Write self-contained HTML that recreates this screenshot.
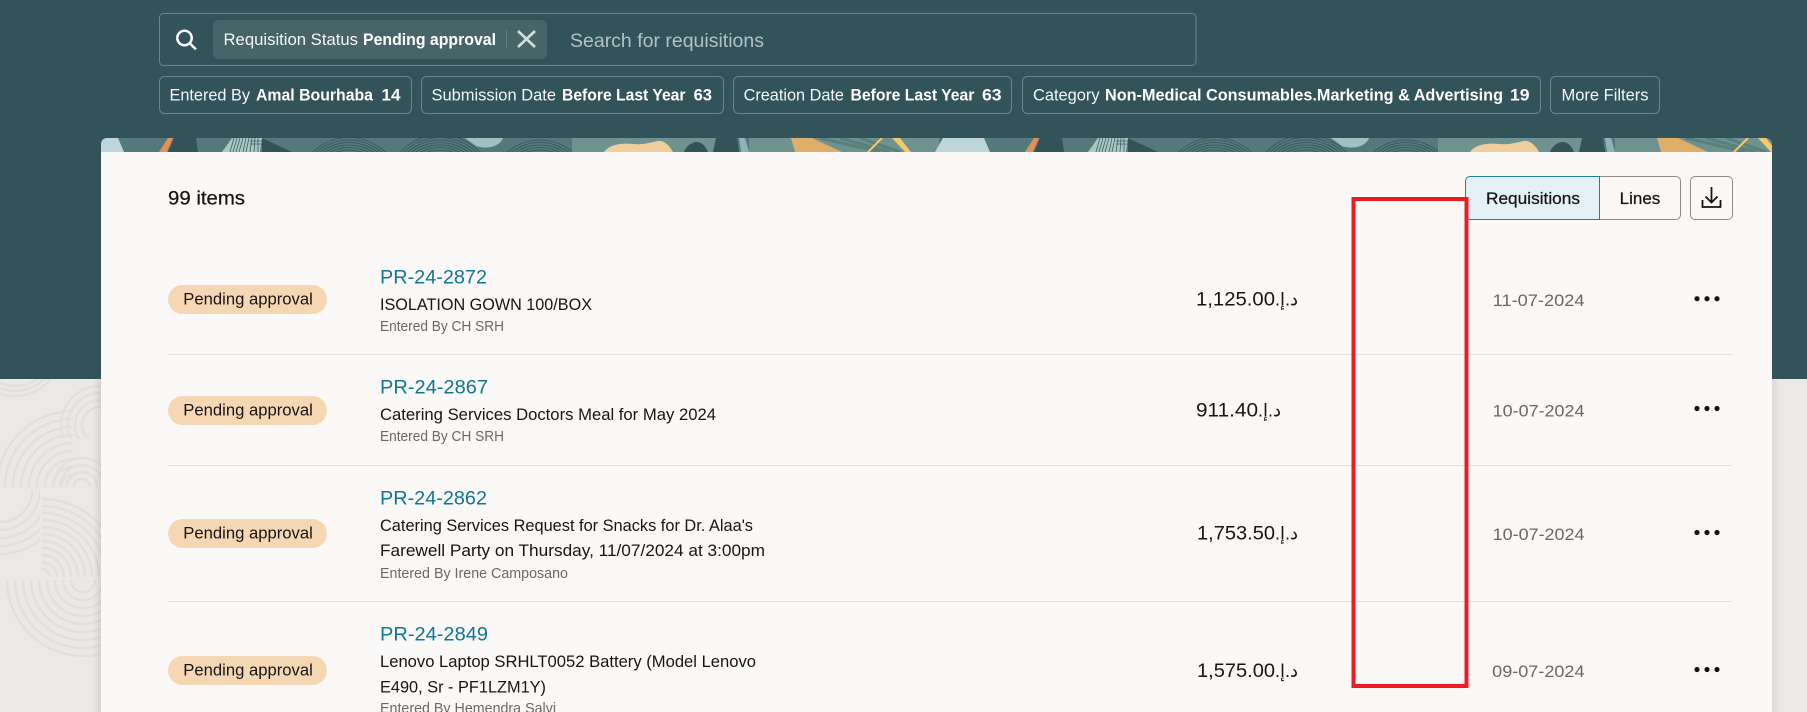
<!DOCTYPE html>
<html lang="en"><head><meta charset="utf-8"><title>Requisitions</title>
<style>
html,body{margin:0;padding:0;width:1807px;height:712px;overflow:hidden;background:#ebe9e7}
svg{display:block}
text{font-family:"Liberation Sans","DejaVu Sans",sans-serif;white-space:pre}
.f{font-size:16.8px;fill:#f4f6f6}
.b{font-weight:700;fill:#fff}
.ph{font-size:19.5px;fill:#b3c1c3}
.pr{font-size:19.5px;fill:#0f7696}
.d{font-size:16.8px;fill:#161513}
.e{font-size:14.4px;fill:#6b6864}
.a{font-size:19.5px;fill:#161513}
.dt{font-size:16.8px;fill:#6b6864}
.bd{font-size:16.8px;fill:#161513}
.ar{font-size:18px;fill:#161513;direction:ltr;unicode-bidi:bidi-override}
.m{stroke:#161513;stroke-width:.25px}
.pill{fill:none;stroke:#6c8388;stroke-width:1}
.bg-arc circle{fill:none;stroke:#e2e0de;stroke-width:2.4}
.fp circle{fill:none;stroke:#345557;stroke-width:.8}
</style></head><body>
<svg width="1807" height="712" viewBox="0 0 1807 712" xmlns="http://www.w3.org/2000/svg">
<defs>
<clipPath id="cardTop"><path d="M101 152V144a6 6 0 0 1 6-6H1766a6 6 0 0 1 6 6V152Z"/></clipPath>
<clipPath id="t1"><rect x="0" y="400" width="73" height="87"/></clipPath>
<clipPath id="t1b"><rect x="55" y="440" width="46" height="47"/></clipPath>
<clipPath id="t2"><rect x="42" y="490" width="60" height="87"/></clipPath>
<clipPath id="t3"><rect x="0" y="490" width="40" height="87"/></clipPath>
<clipPath id="t4"><rect x="0" y="580" width="101" height="80"/></clipPath>
<clipPath id="t5"><rect x="0" y="379" width="60" height="30"/></clipPath>
<clipPath id="t6"><rect x="60" y="379" width="41" height="60"/></clipPath>
<linearGradient id="sh" x1="0" x2="1"><stop offset="0" stop-color="#000" stop-opacity="0"/><stop offset="1" stop-color="#000" stop-opacity=".09"/></linearGradient>
<linearGradient id="sh2" x1="0" x2="1"><stop offset="0" stop-color="#000" stop-opacity=".07"/><stop offset="1" stop-color="#000" stop-opacity="0"/></linearGradient>
<g id="bn">
<rect x="101" y="138" width="866" height="14" fill="#54797a"/>
<path d="M96 138H118L124 152H96Z" fill="#bdd6d9"/>
<path d="M168 138H173L167 152H159Z" fill="#e58f55"/>
<path d="M174 138H196L198 152H168Z" fill="#33525a"/>
<path d="M232 138H262L260 152H222Z" fill="#a8c7c5"/>
<g fill="none" stroke="#3d5e60" stroke-width=".8"><path d="M234 138l-4 14M237 138l-4 14M240 138l-4 14M243 138l-4 14M246 138l-3 14M249 138l-3 14M252 138l-2 14M255 138l-1 14M258 138v14"/><path d="M250 141H262M250 144H262"/></g>
<path d="M262 138L292 152H262Z" fill="#33525a"/>
<g class="fp">
<circle cx="349" cy="190" r="40"/><circle cx="349" cy="190" r="42.500"/><circle cx="349" cy="190" r="45"/><circle cx="349" cy="190" r="47.500"/><circle cx="349" cy="190" r="50"/><circle cx="349" cy="190" r="52.500"/>
<circle cx="440" cy="190" r="40"/><circle cx="440" cy="190" r="42.500"/><circle cx="440" cy="190" r="45"/><circle cx="440" cy="190" r="47.500"/><circle cx="440" cy="190" r="50"/><circle cx="440" cy="190" r="52.500"/><circle cx="440" cy="190" r="55"/>
<circle cx="540" cy="190" r="40"/><circle cx="540" cy="190" r="42.500"/><circle cx="540" cy="190" r="45"/><circle cx="540" cy="190" r="47.500"/><circle cx="540" cy="190" r="50"/>
</g>
<path d="M465 138H503C500 146 488 150 476 146Z" fill="#9cc2c1"/>
<rect x="572" y="138" width="150" height="14" fill="#6d928f"/>
<path d="M604 152C610 144 622 143 634 144C644 145 652 142 658 141C664 140 670 146 673 152Z" fill="#efcf9d"/>
<path d="M684 152C686 146 692 142 697 142C702 142 706 147 708 152Z" fill="#33525a"/>
<path d="M716 138H737L739 152H713Z" fill="#33525a"/>
<path d="M739 138H745L749 152H741Z" fill="#8db5b5"/>
<rect x="749" y="138" width="190" height="14" fill="#6d928f"/>
<path d="M791 138H812L842 152H795Z" fill="#e0ae68"/>
<path d="M820 138L880 152M840 138L890 152M860 138L900 152" stroke="#58807d" stroke-width="3" fill="none"/>
<path d="M882 138L868 152" stroke="#f3ca6b" stroke-width="2" fill="none"/>
<path d="M892 138H900L911 152H905Z" fill="#f3ca6b"/>
<path d="M943 138H977L987 152H935Z" fill="#bdd6d9"/>
</g>
</defs>

<!-- page backgrounds -->
<rect width="1807" height="712" fill="#ebe9e7"/>
<rect width="1807" height="379" fill="#33535a"/>

<!-- background arcs -->
<g class="bg-arc">
<g clip-path="url(#t5)"><circle cx="15" cy="350" r="36"/><circle cx="15" cy="350" r="41"/><circle cx="15" cy="350" r="46"/></g>
<g clip-path="url(#t6)"><circle cx="100" cy="425" r="18"/><circle cx="100" cy="425" r="25"/><circle cx="100" cy="425" r="32"/><circle cx="100" cy="425" r="39"/></g>
<g clip-path="url(#t1)"><circle cx="73" cy="487" r="12"/><circle cx="73" cy="487" r="20"/><circle cx="73" cy="487" r="28"/><circle cx="73" cy="487" r="36"/><circle cx="73" cy="487" r="44"/><circle cx="73" cy="487" r="52"/><circle cx="73" cy="487" r="60"/><circle cx="73" cy="487" r="68"/><circle cx="73" cy="487" r="76"/></g>
<g clip-path="url(#t1b)"><circle cx="82" cy="487" r="8"/><circle cx="82" cy="487" r="15"/><circle cx="82" cy="487" r="22"/><circle cx="82" cy="487" r="29"/></g>
<g clip-path="url(#t2)"><circle cx="42" cy="577" r="8"/><circle cx="42" cy="577" r="15"/><circle cx="42" cy="577" r="22"/><circle cx="42" cy="577" r="29"/><circle cx="42" cy="577" r="36"/><circle cx="42" cy="577" r="43"/><circle cx="42" cy="577" r="50"/><circle cx="42" cy="577" r="57"/><circle cx="42" cy="577" r="64"/><circle cx="42" cy="577" r="71"/><circle cx="42" cy="577" r="78"/></g>
<g clip-path="url(#t3)"><circle cx="0" cy="490" r="32"/><circle cx="0" cy="490" r="40"/><circle cx="0" cy="490" r="48"/><circle cx="0" cy="490" r="56"/><circle cx="0" cy="490" r="64"/></g>
<g clip-path="url(#t4)"><circle cx="83" cy="580" r="12"/><circle cx="83" cy="580" r="20"/><circle cx="83" cy="580" r="28"/><circle cx="83" cy="580" r="36"/><circle cx="83" cy="580" r="44"/><circle cx="83" cy="580" r="52"/><circle cx="83" cy="580" r="60"/><circle cx="83" cy="580" r="68"/><circle cx="83" cy="580" r="76"/></g>
</g>
<rect x="93" y="379" width="8" height="333" fill="url(#sh)"/>
<rect x="1772" y="379" width="8" height="333" fill="url(#sh2)"/>

<!-- search -->
<rect x="159.500" y="13.500" width="1036.500" height="52" rx="4" fill="none" stroke="#6c8388"/>
<circle cx="184.500" cy="38" r="7.200" fill="none" stroke="#fff" stroke-width="2.500"/>
<path d="M189.700 43.300L196 49.400" stroke="#fff" stroke-width="2.500" fill="none"/>
<rect x="213" y="20" width="334" height="39" rx="6" fill="#476469"/>
<text class="f" x="223.500" y="45" textLength="134.500" lengthAdjust="spacingAndGlyphs">Requisition Status</text>
<text class="f b" x="363" y="45" textLength="133" lengthAdjust="spacingAndGlyphs">Pending approval</text>
<path d="M506.500 30V49" stroke="#658085"/>
<path d="M518 31L535 47M535 31L518 47" stroke="#d5dddd" stroke-width="2.600" fill="none"/>
<text class="ph" x="570" y="47" textLength="194" lengthAdjust="spacingAndGlyphs">Search for requisitions</text>

<!-- filter pills -->
<rect class="pill" x="159.500" y="76.500" width="252" height="37" rx="5"/>
<text class="f" x="169.500" y="100.500" textLength="80.500" lengthAdjust="spacingAndGlyphs">Entered By</text>
<text class="f b" x="256" y="100.500" textLength="117" lengthAdjust="spacingAndGlyphs">Amal Bourhaba</text>
<text class="f b" x="381.500" y="100.500" textLength="19" lengthAdjust="spacingAndGlyphs">14</text>

<rect class="pill" x="421.500" y="76.500" width="302" height="37" rx="5"/>
<text class="f" x="431.500" y="100.500" textLength="124.500" lengthAdjust="spacingAndGlyphs">Submission Date</text>
<text class="f b" x="562" y="100.500" textLength="123.500" lengthAdjust="spacingAndGlyphs">Before Last Year</text>
<text class="f b" x="693.600" y="100.500" textLength="18.400" lengthAdjust="spacingAndGlyphs">63</text>

<rect class="pill" x="733.500" y="76.500" width="278" height="37" rx="5"/>
<text class="f" x="743.600" y="100.500" textLength="100.400" lengthAdjust="spacingAndGlyphs">Creation Date</text>
<text class="f b" x="850.500" y="100.500" textLength="123.900" lengthAdjust="spacingAndGlyphs">Before Last Year</text>
<text class="f b" x="982" y="100.500" textLength="19.600" lengthAdjust="spacingAndGlyphs">63</text>

<rect class="pill" x="1022.500" y="76.500" width="518" height="37" rx="5"/>
<text class="f" x="1033" y="100.500" textLength="66.600" lengthAdjust="spacingAndGlyphs">Category</text>
<text class="f b" x="1105" y="100.500" textLength="398" lengthAdjust="spacingAndGlyphs">Non-Medical Consumables.Marketing &amp; Advertising</text>
<text class="f b" x="1510" y="100.500" textLength="19.500" lengthAdjust="spacingAndGlyphs">19</text>

<rect class="pill" x="1550.500" y="76.500" width="109" height="37" rx="5"/>
<text class="f" x="1561.500" y="100.500" textLength="87" lengthAdjust="spacingAndGlyphs">More Filters</text>

<!-- card -->
<path d="M101 152H1772V712H101Z" fill="#fbf9f8"/>
<g clip-path="url(#cardTop)">
<use href="#bn"/>
<use href="#bn" x="866"/>
</g>

<text class="a m" x="168" y="204.500" textLength="77" lengthAdjust="spacingAndGlyphs">99 items</text>

<!-- toggle -->
<path d="M1599.500 176.500H1676a4.500 4.500 0 0 1 4.500 4.500V215a4.500 4.500 0 0 1-4.500 4.500H1599.500Z" fill="none" stroke="#8e8c8a"/>
<path d="M1599.500 176.500H1470a4.500 4.500 0 0 0-4.500 4.500V215a4.500 4.500 0 0 0 4.500 4.500H1599.500Z" fill="#e4f1f7" stroke="#227e9e"/>
<text class="d m" x="1486" y="204" textLength="94" lengthAdjust="spacingAndGlyphs">Requisitions</text>
<text class="d m" x="1619.700" y="204" textLength="40.600" lengthAdjust="spacingAndGlyphs">Lines</text>
<rect x="1690.500" y="176.500" width="42" height="43" rx="4.500" fill="none" stroke="#8e8c8a"/>
<path d="M1711.500 187V202M1705.500 196.500L1711.500 202.500L1717.500 196.500M1702.500 200V207H1720.500V200" fill="none" stroke="#161513" stroke-width="1.800"/>

<!-- separators -->
<path d="M168 354.500H1732M168 465.500H1732M168 601.500H1732" stroke="#e2dfdc" stroke-width="1"/>

<!-- badges -->
<rect x="168" y="285" width="159" height="29" rx="14.500" fill="#f6d7b4"/>
<rect x="168" y="396" width="159" height="29" rx="14.500" fill="#f6d7b4"/>
<rect x="168" y="519" width="159" height="29" rx="14.500" fill="#f6d7b4"/>
<rect x="168" y="656" width="159" height="29" rx="14.500" fill="#f6d7b4"/>
<text class="bd" x="183.300" y="304.500" textLength="129.500" lengthAdjust="spacingAndGlyphs">Pending approval</text>
<text class="bd" x="183.300" y="415.500" textLength="129.500" lengthAdjust="spacingAndGlyphs">Pending approval</text>
<text class="bd" x="183.300" y="538.500" textLength="129.500" lengthAdjust="spacingAndGlyphs">Pending approval</text>
<text class="bd" x="183.300" y="675.500" textLength="129.500" lengthAdjust="spacingAndGlyphs">Pending approval</text>

<!-- row 1 -->
<text class="pr" x="380" y="283.500" textLength="107" lengthAdjust="spacingAndGlyphs">PR-24-2872</text>
<text class="d" x="380" y="310" textLength="212" lengthAdjust="spacingAndGlyphs">ISOLATION GOWN 100/BOX</text>
<text class="e" x="380" y="331" textLength="124" lengthAdjust="spacingAndGlyphs">Entered By CH SRH</text>
<!-- row 2 -->
<text class="pr" x="380" y="393.500" textLength="108" lengthAdjust="spacingAndGlyphs">PR-24-2867</text>
<text class="d" x="380" y="420" textLength="336" lengthAdjust="spacingAndGlyphs">Catering Services Doctors Meal for May 2024</text>
<text class="e" x="380" y="441" textLength="124" lengthAdjust="spacingAndGlyphs">Entered By CH SRH</text>
<!-- row 3 -->
<text class="pr" x="380" y="504.500" textLength="107" lengthAdjust="spacingAndGlyphs">PR-24-2862</text>
<text class="d" x="380" y="531" textLength="373" lengthAdjust="spacingAndGlyphs">Catering Services Request for Snacks for Dr. Alaa's</text>
<text class="d" x="380" y="556" textLength="385" lengthAdjust="spacingAndGlyphs">Farewell Party on Thursday, 11/07/2024 at 3:00pm</text>
<text class="e" x="380" y="578" textLength="188" lengthAdjust="spacingAndGlyphs">Entered By Irene Camposano</text>
<!-- row 4 -->
<text class="pr" x="380" y="640.500" textLength="108" lengthAdjust="spacingAndGlyphs">PR-24-2849</text>
<text class="d" x="380" y="667" textLength="376" lengthAdjust="spacingAndGlyphs">Lenovo Laptop SRHLT0052 Battery (Model Lenovo</text>
<text class="d" x="380" y="692.500" textLength="166" lengthAdjust="spacingAndGlyphs">E490, Sr - PF1LZM1Y)</text>
<text class="e" x="380" y="713" textLength="176" lengthAdjust="spacingAndGlyphs">Entered By Hemendra Salvi</text>

<!-- amounts -->
<text class="a" x="1196" y="305.500" textLength="79" lengthAdjust="spacingAndGlyphs">1,125.00</text>
<text class="ar" x="1275" y="305.500">.إ.د</text>
<text class="a" x="1196" y="416.500" textLength="62" lengthAdjust="spacingAndGlyphs">911.40</text>
<text class="ar" x="1258" y="416.500">.إ.د</text>
<text class="a" x="1197" y="539.500" textLength="78" lengthAdjust="spacingAndGlyphs">1,753.50</text>
<text class="ar" x="1275" y="539.500">.إ.د</text>
<text class="a" x="1197" y="677" textLength="78" lengthAdjust="spacingAndGlyphs">1,575.00</text>
<text class="ar" x="1275" y="677">.إ.د</text>

<!-- dates -->
<text class="dt" x="1492.700" y="306" textLength="91.800" lengthAdjust="spacingAndGlyphs">11-07-2024</text>
<text class="dt" x="1492.700" y="416.500" textLength="91.800" lengthAdjust="spacingAndGlyphs">10-07-2024</text>
<text class="dt" x="1492.700" y="540" textLength="91.800" lengthAdjust="spacingAndGlyphs">10-07-2024</text>
<text class="dt" x="1492.200" y="677" textLength="92.300" lengthAdjust="spacingAndGlyphs">09-07-2024</text>

<!-- action dots -->
<g fill="#161513">
<circle cx="1697" cy="298.700" r="2.600"/><circle cx="1707" cy="298.700" r="2.600"/><circle cx="1717" cy="298.700" r="2.600"/>
<circle cx="1697" cy="408.500" r="2.600"/><circle cx="1707" cy="408.500" r="2.600"/><circle cx="1717" cy="408.500" r="2.600"/>
<circle cx="1697" cy="532.500" r="2.600"/><circle cx="1707" cy="532.500" r="2.600"/><circle cx="1717" cy="532.500" r="2.600"/>
<circle cx="1697" cy="669.500" r="2.600"/><circle cx="1707" cy="669.500" r="2.600"/><circle cx="1717" cy="669.500" r="2.600"/>
</g>

<!-- red annotation -->
<rect x="1353.500" y="199" width="113" height="487" fill="none" stroke="#ed1c24" stroke-width="4"/>
</svg>
</body></html>
